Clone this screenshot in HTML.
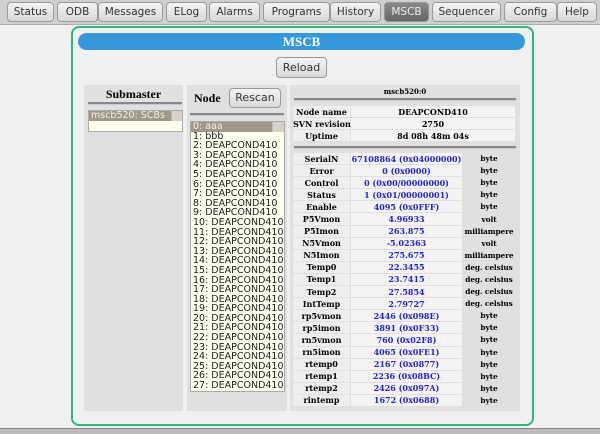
<!DOCTYPE html>
<html><head><style>
body{margin:0;width:600px;height:433px;background:#f0f0f0;font-family:"DejaVu Sans","Liberation Sans",sans-serif;position:relative;overflow:hidden}
.nav{position:absolute;left:0;top:0;width:600px;height:24px;background:#cfcfcf;border-bottom:1px solid #aaa}
.nb{position:absolute;top:2px;height:18px;border:1px solid #999;border-radius:4px;background:linear-gradient(#f4f4f4,#d8d8d8);font-size:10.5px;color:#333;text-align:center;line-height:18px;box-sizing:content-box}
.nb.sel{background:linear-gradient(#888,#666);color:#eee}
.frame{position:absolute;left:71px;top:26px;width:459px;height:396px;border:2px solid #2db77c;border-radius:8px}
.title{position:absolute;left:78px;top:33px;width:447px;height:17px;background:#3498db;border-radius:9px;color:#fff;font:bold 13px "Liberation Serif",serif;text-align:center;line-height:17px}
.btn{position:absolute;border:1px solid #999;border-radius:4px;background:linear-gradient(#f4f4f4,#d8d8d8);font-size:11px;color:#333;text-align:center}
.col{position:absolute;background:#e0e0e0;top:85px;height:326px}
.list{position:absolute;background:#fffff0;border:1px solid #aaa;font-size:9.5px;color:#222;overflow:hidden}
.list div{height:9.6px;line-height:9.6px;padding-left:2px;white-space:nowrap}
.list .s{background:#a09888;color:#f4f0e8}
.sb{position:absolute;right:0;top:0;bottom:0;width:9px;background:#d6d0c8;border-left:1px solid #bbb}
table{border-collapse:separate;border-spacing:1px;font:bold 8px "DejaVu Serif",serif;position:absolute;table-layout:fixed}
td{text-align:center;padding:0;height:11.1px;white-space:nowrap}
td.u{font-size:7.4px;letter-spacing:-0.1px}
.h{position:absolute;height:2px;background:#888;border-bottom:1px solid #ccc}
</style></head><body>
<div class="nav">
<div class="nb" style="left:7px;width:45px">Status</div>
<div class="nb" style="left:57px;width:39px">ODB</div>
<div class="nb" style="left:98px;width:63px">Messages</div>
<div class="nb" style="left:166px;width:39px">ELog</div>
<div class="nb" style="left:209px;width:49px">Alarms</div>
<div class="nb" style="left:263px;width:65px">Programs</div>
<div class="nb" style="left:330px;width:49px">History</div>
<div class="nb sel" style="left:384px;width:43px">MSCB</div>
<div class="nb" style="left:432px;width:67px">Sequencer</div>
<div class="nb" style="left:504px;width:51px">Config</div>
<div class="nb" style="left:557px;width:38px">Help</div>
</div>
<div class="frame"></div>
<div class="title">MSCB</div>
<div class="btn" style="left:276px;top:57px;width:49px;height:19px;line-height:19px">Reload</div>

<div class="col" style="left:84px;width:99px"></div>
<div style="position:absolute;left:84px;top:87px;width:99px;text-align:center;font:bold 12px 'Liberation Serif',serif">Submaster</div>
<div class="h" style="left:88px;top:102px;width:94px"></div>
<div class="list" style="left:88px;top:110px;width:93px;height:20px"><div class="s">mscb520: SCBs</div><div class="sb" style="width:8px"></div></div>

<div class="col" style="left:187px;width:100px"></div>
<div style="position:absolute;left:194px;top:91px;font:bold 12px 'Liberation Serif',serif">Node</div>
<div class="btn" style="left:229px;top:88px;width:50px;height:18px;line-height:18px">Rescan</div>
<div class="h" style="left:190px;top:113px;width:94px"></div>
<div class="list" style="left:190px;top:121px;width:93px;height:269px">
<div class="s">0: aaa</div><div>1: bbb</div><div>2: DEAPCOND410</div><div>3: DEAPCOND410</div><div>4: DEAPCOND410</div><div>5: DEAPCOND410</div><div>6: DEAPCOND410</div><div>7: DEAPCOND410</div><div>8: DEAPCOND410</div><div>9: DEAPCOND410</div><div>10: DEAPCOND410</div><div>11: DEAPCOND410</div><div>12: DEAPCOND410</div><div>13: DEAPCOND410</div><div>14: DEAPCOND410</div><div>15: DEAPCOND410</div><div>16: DEAPCOND410</div><div>17: DEAPCOND410</div><div>18: DEAPCOND410</div><div>19: DEAPCOND410</div><div>20: DEAPCOND410</div><div>21: DEAPCOND410</div><div>22: DEAPCOND410</div><div>23: DEAPCOND410</div><div>24: DEAPCOND410</div><div>25: DEAPCOND410</div><div>26: DEAPCOND410</div><div>27: DEAPCOND410</div>
<div class="sb"></div></div>

<div class="col" style="left:290px;width:230px"></div>
<div style="position:absolute;left:290px;top:87px;width:230px;text-align:center;font:bold 7px 'DejaVu Serif',serif">mscb520:0</div>
<div class="h" style="left:294px;top:98px;width:222px"></div>
<table style="left:292px;top:105px;width:224px;background:#e0e0e0">
<colgroup><col style="width:57px"><col></colgroup>
<tr><td style="background:#eee">Node name</td><td style="background:#f4f4f4">DEAPCOND410</td></tr>
<tr><td style="background:#eee">SVN revision</td><td style="background:#f4f4f4">2750</td></tr>
<tr><td style="background:#eee">Uptime</td><td style="background:#f4f4f4">8d 08h 48m 04s</td></tr>
</table>
<div class="h" style="left:294px;top:146px;width:222px"></div>
<table style="left:292px;top:152px;width:224px;background:#e0e0e0">
<colgroup><col style="width:57px"><col style="width:111px"><col></colgroup>
<tr><td style="background:#eee">SerialN</td><td style="background:#f4f4f4;color:#22d">67108864 (0x04000000)</td><td class="u">byte</td></tr>
<tr><td style="background:#eee">Error</td><td style="background:#f4f4f4;color:#22d">0 (0x0000)</td><td class="u">byte</td></tr>
<tr><td style="background:#eee">Control</td><td style="background:#f4f4f4;color:#22d">0 (0x00/00000000)</td><td class="u">byte</td></tr>
<tr><td style="background:#eee">Status</td><td style="background:#f4f4f4;color:#22d">1 (0x01/00000001)</td><td class="u">byte</td></tr>
<tr><td style="background:#eee">Enable</td><td style="background:#f4f4f4;color:#22d">4095 (0x0FFF)</td><td class="u">byte</td></tr>
<tr><td style="background:#eee">P5Vmon</td><td style="background:#f4f4f4;color:#22d">4.96933</td><td class="u">volt</td></tr>
<tr><td style="background:#eee">P5Imon</td><td style="background:#f4f4f4;color:#22d">263.875</td><td class="u">milliampere</td></tr>
<tr><td style="background:#eee">N5Vmon</td><td style="background:#f4f4f4;color:#22d">-5.02363</td><td class="u">volt</td></tr>
<tr><td style="background:#eee">N5Imon</td><td style="background:#f4f4f4;color:#22d">275.675</td><td class="u">milliampere</td></tr>
<tr><td style="background:#eee">Temp0</td><td style="background:#f4f4f4;color:#22d">22.3455</td><td class="u">deg. celsius</td></tr>
<tr><td style="background:#eee">Temp1</td><td style="background:#f4f4f4;color:#22d">23.7415</td><td class="u">deg. celsius</td></tr>
<tr><td style="background:#eee">Temp2</td><td style="background:#f4f4f4;color:#22d">27.5854</td><td class="u">deg. celsius</td></tr>
<tr><td style="background:#eee">IntTemp</td><td style="background:#f4f4f4;color:#22d">2.79727</td><td class="u">deg. celsius</td></tr>
<tr><td style="background:#eee">rp5vmon</td><td style="background:#f4f4f4;color:#22d">2446 (0x098E)</td><td class="u">byte</td></tr>
<tr><td style="background:#eee">rp5imon</td><td style="background:#f4f4f4;color:#22d">3891 (0x0F33)</td><td class="u">byte</td></tr>
<tr><td style="background:#eee">rn5vmon</td><td style="background:#f4f4f4;color:#22d">760 (0x02F8)</td><td class="u">byte</td></tr>
<tr><td style="background:#eee">rn5imon</td><td style="background:#f4f4f4;color:#22d">4065 (0x0FE1)</td><td class="u">byte</td></tr>
<tr><td style="background:#eee">rtemp0</td><td style="background:#f4f4f4;color:#22d">2167 (0x0877)</td><td class="u">byte</td></tr>
<tr><td style="background:#eee">rtemp1</td><td style="background:#f4f4f4;color:#22d">2236 (0x08BC)</td><td class="u">byte</td></tr>
<tr><td style="background:#eee">rtemp2</td><td style="background:#f4f4f4;color:#22d">2426 (0x097A)</td><td class="u">byte</td></tr>
<tr><td style="background:#eee">rintemp</td><td style="background:#f4f4f4;color:#22d">1672 (0x0688)</td><td class="u">byte</td></tr>
</table>
<div style="position:absolute;left:0;top:428px;width:600px;height:5px;background:#bbb;border-top:1px solid #888"></div>
</body></html>
